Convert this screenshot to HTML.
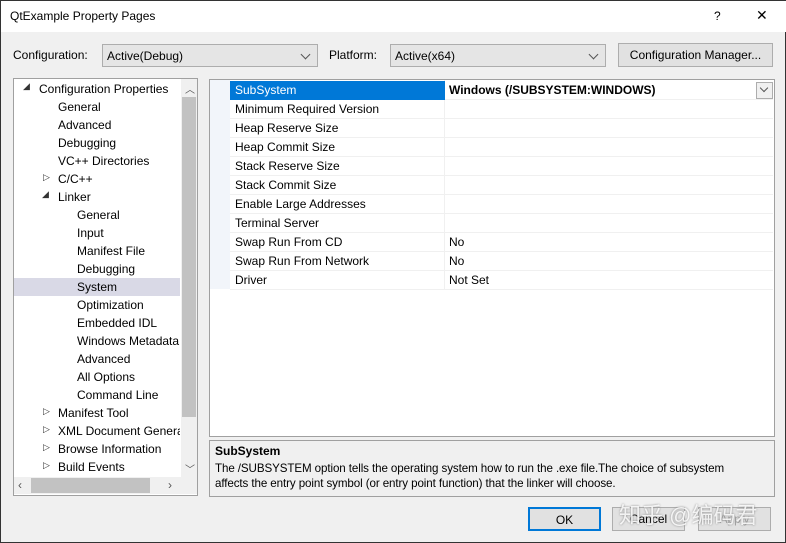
<!DOCTYPE html><html><head><style>
*{margin:0;padding:0;box-sizing:border-box}
body{width:786px;height:543px;background:#f0f0f0;font-family:"Liberation Sans",sans-serif;font-size:12px;color:#000;position:relative;overflow:hidden;border:1px solid #333}
.a{position:absolute}
.t{white-space:nowrap}
.combo{position:absolute;height:23px;background:#e5e5e5;border:1px solid #adadad;padding:4px 4px;font-size:12px}
.combo:after{content:"";position:absolute;right:8px;top:6px;width:6px;height:6px;border-right:1px solid #555;border-bottom:1px solid #555;transform:rotate(45deg)}
.tree div{position:absolute;white-space:nowrap;font-size:12px}
.row{position:absolute;left:229px;width:543px;height:19px;border-bottom:1px solid #f0f0f0;font-size:12px}
.row span{position:absolute;top:2px}
.btn{position:absolute;height:24px;background:#e1e1e1;border:1px solid #adadad;text-align:center;padding-top:4px;font-size:12px}
</style></head><body>
<div class="a" style="left:0;top:0;width:786px;height:31px;background:#fff"></div>
<div class="a t" style="left:9px;top:8px;font-size:12px">QtExample Property Pages</div>
<div class="a" style="left:713px;top:8px;font-size:12px">?</div>
<div class="a" style="left:755px;top:6px;font-size:14px">✕</div>
<div class="a t" style="left:12px;top:47px;font-size:12px">Configuration:</div>
<div class="combo" style="left:101px;top:43px;width:216px">Active(Debug)</div>
<div class="a t" style="left:328px;top:47px;font-size:12px">Platform:</div>
<div class="combo" style="left:389px;top:43px;width:216px">Active(x64)</div>
<div class="btn" style="left:617px;top:42px;width:155px;height:24px">Configuration Manager...</div>
<div class="a" style="left:12px;top:77px;width:185px;height:418px;background:#fff;border:1px solid #a0a0a0"></div>
<div class="a" style="left:180px;top:78px;width:16px;height:398px;background:#f0f0f0"></div>
<div class="a" style="left:181px;top:96px;width:14px;height:320px;background:#c2c2c2"></div>
<div class="a" style="left:184px;top:80px;font-size:10px;color:#555">︿</div>
<div class="a" style="left:184px;top:460px;font-size:10px;color:#555">﹀</div>
<div class="a" style="left:13px;top:476px;width:183px;height:17px;background:#f0f0f0"></div>
<div class="a" style="left:30px;top:477px;width:119px;height:15px;background:#c2c2c2"></div>
<div class="a" style="left:17px;top:477px;font-size:12px;color:#555">‹</div>
<div class="a" style="left:167px;top:477px;font-size:12px;color:#555">›</div>
<div class="a" style="left:13px;top:277px;width:166px;height:18px;background:#d9d9e6"></div>
<div class="tree">
<div style="left:22px;top:80px;font-size:9px;color:#333">◢</div><div style="left:38px;top:81px">Configuration Properties</div>
<div style="left:57px;top:99px">General</div>
<div style="left:57px;top:117px">Advanced</div>
<div style="left:57px;top:135px">Debugging</div>
<div style="left:57px;top:153px">VC++ Directories</div>
<div style="left:42px;top:171px;font-size:9px;color:#333">▷</div><div style="left:57px;top:171px">C/C++</div>
<div style="left:41px;top:188px;font-size:9px;color:#333">◢</div><div style="left:57px;top:189px">Linker</div>
<div style="left:76px;top:207px">General</div>
<div style="left:76px;top:225px">Input</div>
<div style="left:76px;top:243px">Manifest File</div>
<div style="left:76px;top:261px">Debugging</div>
<div style="left:76px;top:279px">System</div>
<div style="left:76px;top:297px">Optimization</div>
<div style="left:76px;top:315px">Embedded IDL</div>
<div style="left:76px;top:333px;width:103px;overflow:hidden">Windows Metadata</div>
<div style="left:76px;top:351px">Advanced</div>
<div style="left:76px;top:369px">All Options</div>
<div style="left:76px;top:387px">Command Line</div>
<div style="left:42px;top:405px;font-size:9px;color:#333">▷</div><div style="left:57px;top:405px">Manifest Tool</div>
<div style="left:42px;top:423px;font-size:9px;color:#333">▷</div><div style="left:57px;top:423px;width:122px;overflow:hidden">XML Document Genera</div>
<div style="left:42px;top:441px;font-size:9px;color:#333">▷</div><div style="left:57px;top:441px">Browse Information</div>
<div style="left:42px;top:459px;font-size:9px;color:#333">▷</div><div style="left:57px;top:459px">Build Events</div>
</div>
<div class="a" style="left:208px;top:78px;width:566px;height:358px;background:#fff;border:1px solid #a0a0a0"></div>
<div class="a" style="left:209px;top:79px;width:20px;height:209px;background:#f2f5fa"></div>
<div class="a" style="left:443px;top:79px;width:1px;height:209px;background:#f0f0f0"></div>
<div class="row" style="top:80px"><span style="left:0;top:0;width:215px;height:19px;background:#0078d7"></span><span style="left:5px;color:#fff">SubSystem</span><span style="left:219px;font-weight:bold">Windows (/SUBSYSTEM:WINDOWS)</span></div>
<div class="a" style="left:755px;top:81px;width:17px;height:17px;background:#f0f0f0;border:1px solid #adadad"></div>
<div class="a" style="left:760px;top:84px;width:6px;height:6px;border-right:1px solid #555;border-bottom:1px solid #555;transform:rotate(45deg)"></div>
<div class="row" style="top:99px"><span style="left:5px">Minimum Required Version</span></div>
<div class="row" style="top:118px"><span style="left:5px">Heap Reserve Size</span></div>
<div class="row" style="top:137px"><span style="left:5px">Heap Commit Size</span></div>
<div class="row" style="top:156px"><span style="left:5px">Stack Reserve Size</span></div>
<div class="row" style="top:175px"><span style="left:5px">Stack Commit Size</span></div>
<div class="row" style="top:194px"><span style="left:5px">Enable Large Addresses</span></div>
<div class="row" style="top:213px"><span style="left:5px">Terminal Server</span></div>
<div class="row" style="top:232px"><span style="left:5px">Swap Run From CD</span><span style="left:219px">No</span></div>
<div class="row" style="top:251px"><span style="left:5px">Swap Run From Network</span><span style="left:219px">No</span></div>
<div class="row" style="top:270px"><span style="left:5px">Driver</span><span style="left:219px">Not Set</span></div>
<div class="a" style="left:208px;top:439px;width:566px;height:57px;border:1px solid #a0a0a0"></div>
<div class="a t" style="left:214px;top:443px;font-weight:bold;font-size:12px">SubSystem</div>
<div class="a t" style="left:214px;top:461px;font-size:11.6px;letter-spacing:-0.1px">The /SUBSYSTEM option tells the operating system how to run the .exe file.The choice of subsystem</div>
<div class="a t" style="left:214px;top:476px;font-size:11.6px;letter-spacing:-0.1px">affects the entry point symbol (or entry point function) that the linker will choose.</div>
<div class="btn" style="left:527px;top:506px;width:73px;border:2px solid #0078d7">OK</div>
<div class="btn" style="left:611px;top:506px;width:73px">Cancel</div>
<div class="btn" style="left:697px;top:506px;width:73px;color:#a0a0a0">Apply</div>
<div class="a t" style="left:618px;top:497px;font-size:22px;color:rgba(255,255,255,0.85);font-family:'Liberation Sans','Noto Sans CJK SC',sans-serif;text-shadow:0 0 2px #888">知乎 @编码君</div>
</body></html>
